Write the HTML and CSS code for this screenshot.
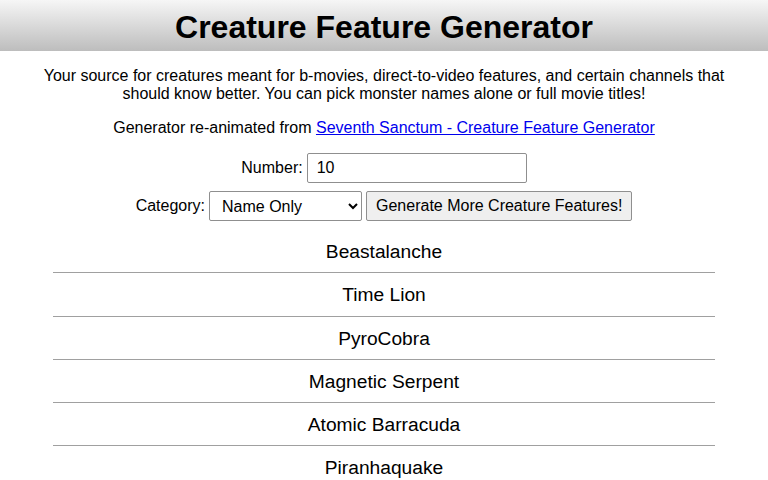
FILE: index.html
```html
<!DOCTYPE html>
<html lang="en">
<head>
<meta charset="utf-8">
<title>Creature Feature Generator</title>
<link rel="stylesheet" href="styles.css">
</head>
<body>
<header class="banner">
  <h1 class="title">Creature Feature Generator</h1>
</header>
<main class="content">
  <p class="intro">Your source for creatures meant for b-movies, direct-to-video features, and certain channels that should know better. You can pick monster names alone or full movie titles!</p>
  <p class="credit">Generator re-animated from <a href="#">Seventh Sanctum - Creature Feature Generator</a></p>
  <form class="controls">
    <div class="row">
      <label for="num">Number:</label>
      <input id="num" class="num-input" type="text" value="10">
    </div>
    <div class="row">
      <label for="cat">Category:</label>
      <select id="cat" class="cat-select">
        <option>Name Only</option>
        <option>Full Title</option>
      </select>
      <button type="button" class="gen-btn">Generate More Creature Features!</button>
    </div>
  </form>
  <ul class="results">
    <li>Beastalanche</li>
    <li>Time Lion</li>
    <li>PyroCobra</li>
    <li>Magnetic Serpent</li>
    <li>Atomic Barracuda</li>
    <li>Piranhaquake</li>
  </ul>
</main>
</body>
</html>
```
FILE: styles.css
```css
html, body {
  margin: 0;
  padding: 0;
  background: #fff;
  font-family: "Liberation Sans", Arial, sans-serif;
  color: #000;
  font-size: 16px;
}
.banner {
  height: 51px;
  box-sizing: border-box;
  padding-top: 3px;
  background: linear-gradient(to bottom, #f6f6f6, #bdbdbd);
  display: flex;
  align-items: center;
  justify-content: center;
}
.title {
  margin: 0;
  font-size: 32px;
  font-weight: bold;
  line-height: 40px;
}
.content {
  display: flex;
  flex-direction: column;
  align-items: center;
}
.intro {
  width: 700px;
  margin: 16px 0 0;
  text-align: center;
  line-height: 18px;
}
.credit {
  margin: 16px 0 0;
  text-align: center;
  line-height: 18px;
}
.credit a {
  color: #0000ee;
}
.controls {
  margin-top: 16px;
  display: flex;
  flex-direction: column;
  align-items: center;
  gap: 8px;
}
.row {
  display: flex;
  align-items: center;
  gap: 4px;
}
.num-input {
  width: 220px;
  height: 30px;
  box-sizing: border-box;
  border: 1px solid #8f8f8f;
  border-radius: 2px;
  padding: 0 9px;
  font: 16px "Liberation Sans", Arial, sans-serif;
}
.cat-select {
  width: 153px;
  height: 30px;
  box-sizing: border-box;
  border: 1px solid #8f8f8f;
  border-radius: 2px;
  padding: 0 8px;
  font: 16px "Liberation Sans", Arial, sans-serif;
  background: #fff;
}
.gen-btn {
  height: 30px;
  box-sizing: border-box;
  border: 1px solid #8f8f8f;
  border-radius: 2px;
  background: #efefef;
  padding: 0 9px;
  font: 16px "Liberation Sans", Arial, sans-serif;
  color: #000;
}
.results {
  list-style: none;
  margin: 9px 0 0;
  padding: 0;
  width: 662px;
}
.results li {
  text-align: center;
  font-size: 19.2px;
  line-height: 22.25px;
  padding: 11px 0 9px;
  border-bottom: 1px solid #a0a0a0;
}
```
